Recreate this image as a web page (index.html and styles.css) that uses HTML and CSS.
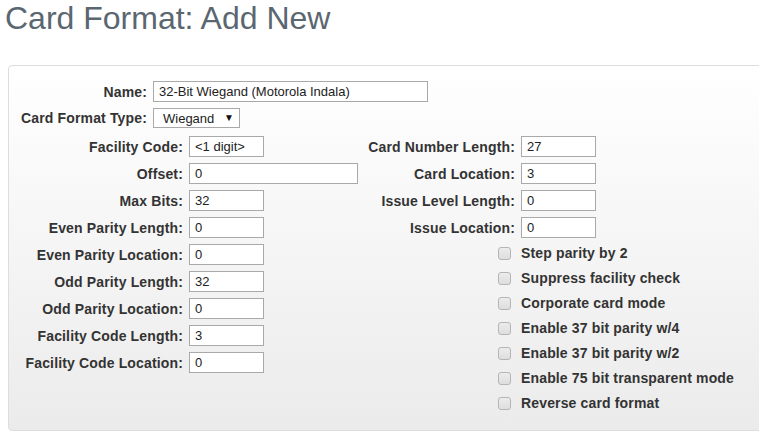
FILE: index.html
```html
<!DOCTYPE html>
<html lang="en">
<head>
    <meta charset="UTF-8">
    <title>Card Format: Add New</title>
    <link rel="stylesheet" href="styles.css">
</head>
<body>
    <h1>Card Format: Add New</h1>

    <div class="panel">
        <div class="form-top">
            <label for="name">Name:</label>
            <input type="text" id="name" class="wide" value="32-Bit Wiegand (Motorola Indala)">
            <label for="type">Card Format Type:</label>
            <span class="select-wrap">
                <select id="type">
                    <option>Wiegand</option>
                </select>
            </span>
        </div>

        <div class="columns">
            <div class="form-grid left">
                <label>Facility Code:</label>
                <input type="text" value="&lt;1 digit&gt;">
                <label>Offset:</label>
                <input type="text" class="medium" value="0">
                <label>Max Bits:</label>
                <input type="text" value="32">
                <label>Even Parity Length:</label>
                <input type="text" value="0">
                <label>Even Parity Location:</label>
                <input type="text" value="0">
                <label>Odd Parity Length:</label>
                <input type="text" value="32">
                <label>Odd Parity Location:</label>
                <input type="text" value="0">
                <label>Facility Code Length:</label>
                <input type="text" value="3">
                <label>Facility Code Location:</label>
                <input type="text" value="0">
            </div>

            <div class="form-grid right">
                <label>Card Number Length:</label>
                <input type="text" value="27">
                <label>Card Location:</label>
                <input type="text" value="3">
                <label>Issue Level Length:</label>
                <input type="text" value="0">
                <label>Issue Location:</label>
                <input type="text" value="0">

                <span class="check"><input type="checkbox" id="c1"></span>
                <label for="c1" class="check-label">Step parity by 2</label>
                <span class="check"><input type="checkbox" id="c2"></span>
                <label for="c2" class="check-label">Suppress facility check</label>
                <span class="check"><input type="checkbox" id="c3"></span>
                <label for="c3" class="check-label">Corporate card mode</label>
                <span class="check"><input type="checkbox" id="c4"></span>
                <label for="c4" class="check-label">Enable 37 bit parity w/4</label>
                <span class="check"><input type="checkbox" id="c5"></span>
                <label for="c5" class="check-label">Enable 37 bit parity w/2</label>
                <span class="check"><input type="checkbox" id="c6"></span>
                <label for="c6" class="check-label">Enable 75 bit transparent mode</label>
                <span class="check"><input type="checkbox" id="c7"></span>
                <label for="c7" class="check-label">Reverse card format</label>
            </div>
        </div>
    </div>
</body>
</html>
```

FILE: styles.css
```css
html, body {
    overflow: hidden;
}
body {
    margin: 0;
    font-family: "Liberation Sans", Arial, sans-serif;
    font-size: 13px;
    color: #333;
    background: #fff;
}
h1 {
    margin: 0 0 0 5px;
    font-size: 32px;
    font-weight: normal;
    color: #5b6770;
    line-height: 36px;
}
.panel {
    margin: 29px -20px 0 8px;
    padding: 12px 0 14px 8px;
    border: 1px solid #ddd;
    border-radius: 4px;
    background: linear-gradient(#fff, #ebebeb);
}
label {
    font-size: 14px;
    font-weight: bold;
    letter-spacing: 0.15px;
    text-align: right;
    white-space: nowrap;
}
input[type="text"] {
    box-sizing: border-box;
    width: 75px;
    height: 21px;
    margin: 3px 0;
    padding: 0 5px;
    border: 1px solid #a9a9a9;
    font-family: "Liberation Sans", Arial, sans-serif;
    font-size: 13px;
    color: #222;
    background: #fff;
}
input.wide {
    width: 275px;
}
input.medium {
    width: 169px;
}
.form-top {
    display: grid;
    grid-template-columns: 130px auto;
    column-gap: 6px;
    align-items: center;
    justify-items: start;
}
.form-top label {
    justify-self: end;
}
.select-wrap {
    position: relative;
    display: inline-block;
    margin: 3px 0 2px;
}
.select-wrap::after {
    content: "\25BC";
    position: absolute;
    right: 6px;
    top: 4px;
    font-size: 10px;
    color: #111;
    pointer-events: none;
}
select {
    -webkit-appearance: none;
    appearance: none;
    box-sizing: border-box;
    width: 87px;
    height: 20px;
    padding: 0 0 0 9px;
    border: 1px solid #a9a9a9;
    border-radius: 0;
    background: #fff;
    font-family: "Liberation Sans", Arial, sans-serif;
    font-size: 13px;
    color: #222;
}
.columns {
    display: flex;
    align-items: flex-start;
    margin-top: 3px;
}
.form-grid {
    display: grid;
    column-gap: 6px;
    align-items: center;
    align-content: start;
    justify-items: start;
}
.form-grid label {
    justify-self: end;
}
.left {
    grid-template-columns: 166px auto;
    width: 345px;
}
.right {
    grid-template-columns: 153px auto;
}
.form-grid .check-label {
    justify-self: start;
    line-height: 25px;
}
.check {
    justify-self: end;
    height: 25px;
    display: flex;
    align-items: center;
}
input[type="checkbox"] {
    -webkit-appearance: none;
    appearance: none;
    box-sizing: border-box;
    width: 13px;
    height: 13px;
    margin: 0 4px 0 0;
    border: 1px solid #b5b5b5;
    border-radius: 3px;
    background: linear-gradient(#ececec, #dedede);
}
```
